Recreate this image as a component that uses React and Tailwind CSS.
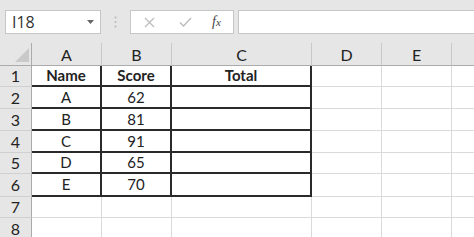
import React from "react";

const cols = [
  { key: "A", w: "w-[70px]" },
  { key: "B", w: "w-[70px]" },
  { key: "C", w: "w-[140px]" },
  { key: "D", w: "w-[70px]" },
  { key: "E", w: "w-[70px]" },
  { key: "F", w: "w-[60px]" },
];

const data = [
  ["Name", "Score", "Total"],
  ["A", "62", ""],
  ["B", "81", ""],
  ["C", "91", ""],
  ["D", "65", ""],
  ["E", "70", ""],
];

const rowH = ["h-[21px]", "h-[22px]", "h-[22px]", "h-[22px]", "h-[21px]", "h-[23px]", "h-[21px]", "h-[22px]"];

export default function App() {
  return (
    <div className="w-[474px] h-[237px] overflow-hidden bg-[#e6e6e6] font-['Lato',sans-serif] text-[#222]">
      {/* formula bar */}
      <div className="h-[43px] flex items-start pt-[10px]">
        <div className="ml-[5px] w-[96px] h-[24px] bg-white border border-[#c6c6c6] flex items-center justify-between pl-[6px] pr-[6px]">
          <span className="text-[16px] font-['Open_Sans',sans-serif] text-[#333] leading-none">I18</span>
          <svg width="7" height="4" viewBox="0 0 7 4"><path d="M0 0h7L3.5 4z" fill="#666" /></svg>
        </div>
        <div className="w-[29px] h-[24px] flex items-center justify-center">
          <svg width="3" height="12" viewBox="0 0 3 12">
            <circle cx="1.5" cy="1.5" r="1" fill="#b8b8b8" />
            <circle cx="1.5" cy="6" r="1" fill="#b8b8b8" />
            <circle cx="1.5" cy="10.5" r="1" fill="#b8b8b8" />
          </svg>
        </div>
        <div className="w-[104px] h-[24px] bg-white border border-[#c6c6c6] flex items-center pl-[13px]">
          <svg width="11" height="11" viewBox="0 0 11 11"><path d="M1 1l9 9M10 1l-9 9" stroke="#bcbcbc" strokeWidth="1.3" /></svg>
          <svg className="ml-[24px]" width="13" height="10" viewBox="0 0 13 10"><path d="M1 5.5l3.5 3.5L12 1" stroke="#bcbcbc" strokeWidth="1.4" fill="none" /></svg>
          <span className="ml-[20px] font-['Liberation_Serif',serif] italic text-[14px] text-[#444] leading-none">f<span className="text-[11px]">x</span></span>
        </div>
        <div className="ml-[4px] flex-1 h-[24px] bg-white border border-[#c6c6c6] border-r-0" />
      </div>

      {/* header row */}
      <div className="flex h-[23px] bg-[#e6e6e6]">
        <div className="w-[32px] shrink-0 relative border-r border-b border-[#ababab]">
          <svg className="absolute left-0 top-0" width="32" height="23" viewBox="0 0 32 23">
            <path d="M15 19H29V5z" fill="#c9c9c9" />
          </svg>
        </div>
        {cols.map((c) => (
          <div
            key={c.key}
            className={`${c.w} shrink-0 flex items-center justify-center text-[16px] border-b border-b-[#ababab] border-r border-r-[#c8c8c8] pt-[1px]`}
          >
            {c.key !== "F" ? c.key : ""}
          </div>
        ))}
      </div>

      {/* body rows */}
      {rowH.map((h, r) => {
        const inTable = r < 6;
        return (
          <div key={r} className={`flex ${h}`}>
            <div className="w-[32px] shrink-0 bg-[#e6e6e6] flex items-center justify-center text-[16px] border-b border-b-[#d0d0d0] border-r border-r-[#ababab]">
              {r + 1}
            </div>
            {cols.map((c, ci) => {
              const tableCell = inTable && ci < 3;
              const val = tableCell ? data[r][ci] : "";
              return (
                <div
                  key={c.key}
                  className={`${c.w} shrink-0 bg-white flex items-center justify-center text-[15px] ${tableCell ? "border-r-2 border-b-2 border-[#2a2a2a]" : "border-r border-b border-[#dadada]"} ${r === 0 ? "font-bold" : ""}`}
                >
                  {val}
                </div>
              );
            })}
          </div>
        );
      })}
    </div>
  );
}
